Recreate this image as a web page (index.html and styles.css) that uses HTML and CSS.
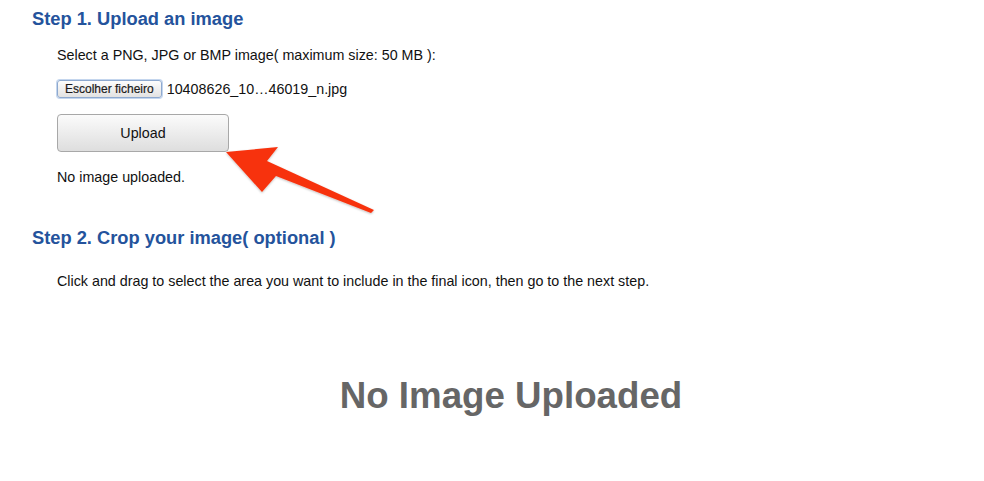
FILE: index.html
```html
<!DOCTYPE html>
<html lang="en">
<head>
    <meta charset="UTF-8">
    <title>Icon converter</title>
    <link rel="stylesheet" href="styles.css">
</head>
<body>
    <div class="page">
        <section class="step step-upload">
            <h2>Step 1. Upload an image</h2>
            <div class="step-body">
                <p class="hint">Select a PNG, JPG or BMP image( maximum size: 50 MB ):</p>
                <div class="file-row">
                    <span class="file-btn">Escolher ficheiro</span>
                    <span class="file-name">10408626_10…46019_n.jpg</span>
                </div>
                <button class="upload-btn">Upload</button>
                <p class="status">No image uploaded.</p>
            </div>

            <!-- annotation arrow -->
            <svg class="arrow" width="170" height="80" viewBox="0 0 170 80">
                <defs>
                    <filter id="shadow" x="-10%" y="-10%" width="130%" height="140%">
                        <feDropShadow dx="0" dy="1" stdDeviation="1.2" flood-color="#000" flood-opacity="0.25"/>
                    </filter>
                </defs>
                <path d="M6 10 L58 5 L47 19 L154 68 L151 71 L56 34 L42 50 Z" fill="#f7330f" filter="url(#shadow)"/>
            </svg>
        </section>

        <section class="step step-crop">
            <h2>Step 2. Crop your image( optional )</h2>
            <div class="step-body">
                <p class="hint">Click and drag to select the area you want to include in the final icon, then go to the next step.</p>
            </div>
            <div class="crop-area">No Image Uploaded</div>
        </section>
    </div>
</body>
</html>
```

FILE: styles.css
```css
body {
    margin: 0;
    font-family: "Liberation Sans", Arial, sans-serif;
    background-color: #fff;
    color: #111;
}
.page {
    padding: 8px 0 0 32px;
}
.step {
    position: relative;
}
.step h2 {
    margin: 0;
    font-size: 18.3px;
    font-weight: bold;
    color: #24539c;
    line-height: 22px;
}
.step-body {
    padding-left: 25px;
}
.hint {
    margin: 0;
    font-size: 14.3px;
    line-height: 18px;
}
.step-upload .hint {
    margin-top: 16px;
}
.file-row {
    display: flex;
    align-items: center;
    gap: 5px;
    margin-top: 15px;
    height: 19px;
}
.file-btn {
    font-size: 12px;
    padding: 1px 7px;
    border: 1px solid #8ea9cf;
    border-radius: 3px;
    background: linear-gradient(#fdfdfd, #e2e2e2);
    box-shadow: 0 0 0 1px #c4d6ee;
    color: #1a1a1a;
    -webkit-text-stroke: 0.2px #1a1a1a;
}
.file-name {
    font-size: 14.3px;
}
.upload-btn {
    display: block;
    margin-top: 16px;
    width: 172px;
    height: 38px;
    font-family: inherit;
    font-size: 14.3px;
    color: #111;
    border: 1px solid #a8a8a8;
    border-radius: 4px;
    background: linear-gradient(#fbfbfb, #dedede);
}
.status {
    margin: 16px 0 0;
    font-size: 14.3px;
    line-height: 18px;
}
.arrow {
    position: absolute;
    left: 188px;
    top: 134px;
}
.step-crop {
    margin-top: 41px;
}
.step-crop .hint {
    margin-top: 23px;
}
.crop-area {
    margin: 85px 0 0 6px;
    width: 946px;
    text-align: center;
    font-size: 36.7px;
    line-height: 42px;
    font-weight: bold;
    color: #666;
}
```
